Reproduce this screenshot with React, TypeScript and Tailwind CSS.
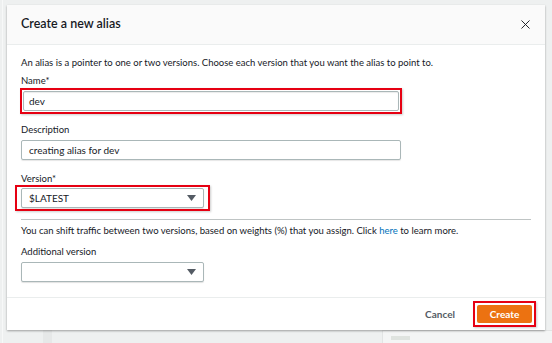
import { X } from "lucide-react";

const font = { fontFamily: "Lato, 'Liberation Sans', sans-serif" };

function Caret() {
  return (
    <svg width="9" height="6" viewBox="0 0 9 6" className="shrink-0">
      <path d="M0 0h9L4.5 6z" fill="#545b64" />
    </svg>
  );
}

function Select({ value }: { value?: string }) {
  return (
    <div className="flex h-[20px] w-[183px] items-center justify-between rounded-[2px] border border-[#aab7b8] bg-white pl-[7px] pr-[7px] shadow-[0_1px_1px_rgba(0,0,0,0.12)]">
      <span className="text-[10px] text-[#16191f]">{value}</span>
      <Caret />
    </div>
  );
}

export default function App() {
  return (
    <div className="relative h-[343px] w-[552px] overflow-hidden bg-[#eef0f0]" style={font}>
      {/* faint page behind the dialog */}
      <div className="absolute left-[2px] top-0 h-full w-px bg-[#f7f8f8]" />
      <div className="absolute bottom-0 left-[43px] h-[13px] w-[9px] bg-[#e6e8e8]" />
      <div className="absolute bottom-0 left-[382px] h-[13px] w-[170px] border-l border-t border-[#e2e4e4] bg-[#f4f5f5]" />
      <div className="absolute bottom-[3px] left-[391px] h-[4px] w-[19px] bg-[#dfe3df]" />

      <div className="relative pl-[7px] pt-[5px]">
        <div className="flex h-[325px] w-[538px] flex-col bg-white shadow-[0_1px_2px_rgba(0,0,0,0.35)]">
          <div className="flex h-[40px] shrink-0 items-center justify-between border-b border-[#eaeded] bg-[#fafafa] pl-[14px] pr-[12px]">
            <h2 className="text-[12.5px] font-semibold text-[#16191f]">Create a new alias</h2>
            <X size={15} strokeWidth={1.5} color="#16191f" />
          </div>

          <div className="flex flex-col px-[14px] pt-[11px] text-[9.5px] text-[#16191f]">
            <p className="leading-[14px]">
              An alias is a pointer to one or two versions. Choose each version that you want the alias to point to.
            </p>

            <label className="mt-[4px] leading-[14px]">Name*</label>
            <div className="-ml-px w-[382px] border-2 border-[#e60012] p-px shadow-[1px_1px_2px_rgba(0,0,0,0.2)]">
              <div className="flex h-[20px] items-center rounded-[2px] border border-[#aab7b8] bg-white pl-[5px] text-[10px] shadow-[inset_0_1px_1px_rgba(0,0,0,0.08)]">
                dev
              </div>
            </div>

            <label className="mt-[9px] leading-[14px]">Description</label>
            <div className="mt-[3px] flex h-[20px] w-[380px] items-center rounded-[2px] border border-[#aab7b8] bg-white pl-[7px] text-[10px] shadow-[0_1px_1px_rgba(0,0,0,0.1)]">
              creating alias for dev
            </div>

            <label className="mt-[12px] leading-[13px]">Version*</label>
            <div className="-ml-[6px] w-[195px] border-2 border-[#e60012] px-[4px] py-px shadow-[1px_1px_2px_rgba(0,0,0,0.2)]">
              <Select value="$LATEST" />
            </div>

            <div className="mt-[8px] h-px w-full bg-[#bfc4c4]" />

            <p className="mt-[4px] leading-[14px]">
              You can shift traffic between two versions, based on weights (%) that you assign. Click{" "}
              <span className="text-[#0073bb]">here</span> to learn more.
            </p>

            <label className="mt-[7px] leading-[14px]">Additional version</label>
            <div className="mt-[3px]">
              <Select />
            </div>
          </div>

          <div className="mt-auto flex h-[33px] shrink-0 items-center justify-end gap-[18px] border-t border-[#eaeded] pr-[9px]">
            <button className="text-[10px] font-bold text-[#545b64]">Cancel</button>
            <div className="border-2 border-[#e60012] p-[2px] shadow-[1px_1px_2px_rgba(0,0,0,0.2)]">
              <button className="flex h-[18px] w-[55px] items-center justify-center rounded-[2px] bg-[#ec7211] text-[10px] font-bold text-white">
                Create
              </button>
            </div>
          </div>
        </div>
      </div>
    </div>
  );
}
